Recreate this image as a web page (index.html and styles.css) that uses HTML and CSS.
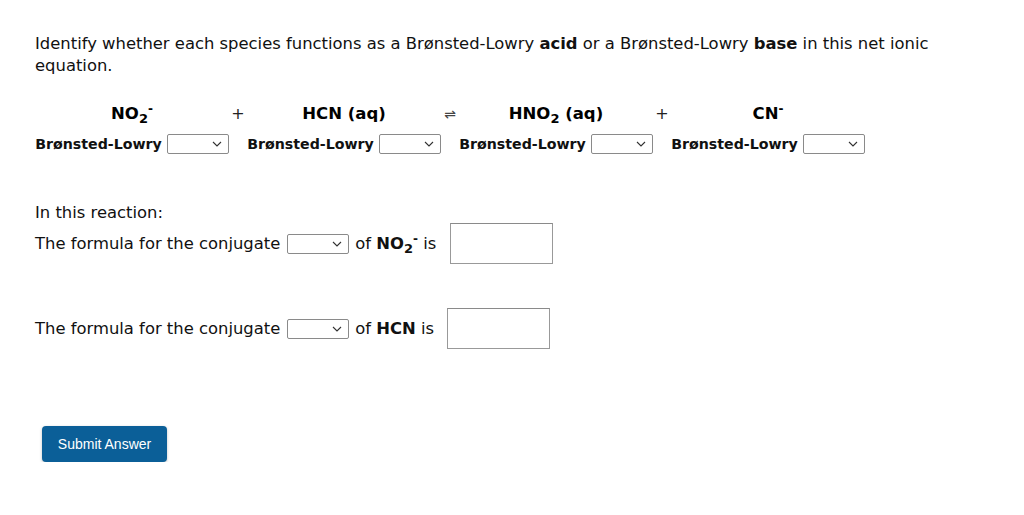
FILE: index.html
```html
<!DOCTYPE html>
<html>
<head>
<meta charset="utf-8">
<link rel="stylesheet" href="styles.css">
</head>
<body>
<div class="page">
  <p class="intro">Identify whether each species functions as a Brønsted-Lowry <b>acid</b> or a Brønsted-Lowry <b>base</b> in this net ionic equation.</p>

  <div class="equation">
    <div class="cell">
      <div class="species">NO<sub>2</sub><sup>-</sup></div>
      <div class="pick"><span class="bl">Brønsted-Lowry</span><select class="sel"><option></option></select></div>
    </div>
    <div class="op">+</div>
    <div class="cell">
      <div class="species">HCN (aq)</div>
      <div class="pick"><span class="bl">Brønsted-Lowry</span><select class="sel"><option></option></select></div>
    </div>
    <div class="op eq">⇌</div>
    <div class="cell">
      <div class="species">HNO<sub>2</sub> (aq)</div>
      <div class="pick"><span class="bl">Brønsted-Lowry</span><select class="sel"><option></option></select></div>
    </div>
    <div class="op">+</div>
    <div class="cell">
      <div class="species">CN<sup>-</sup></div>
      <div class="pick"><span class="bl">Brønsted-Lowry</span><select class="sel"><option></option></select></div>
    </div>
  </div>

  <p class="lead">In this reaction:</p>
  <div class="row row1">
    <span>The formula for the conjugate</span>
    <select class="sel"><option></option></select>
    <span>of <b>NO<sub>2</sub><sup>-</sup></b> is</span>
    <input class="answer" type="text">
  </div>
  <div class="row row2">
    <span>The formula for the conjugate</span>
    <select class="sel"><option></option></select>
    <span>of <b>HCN</b> is</span>
    <input class="answer" type="text">
  </div>

  <button class="submit">Submit Answer</button>
</div>
</body>
</html>
```

FILE: styles.css
```css
html, body {
  margin: 0;
  padding: 0;
  background: #fff;
}
body {
  font-family: "DejaVu Sans", Verdana, sans-serif;
  color: #000;
}
.page {
  padding: 33px 35px 0 35px;
  width: 920px;
}
.intro {
  margin: 0;
  font-size: 16.4px;
  line-height: 22px;
  color: #111;
}
.intro b { font-weight: bold; }

.equation {
  display: flex;
  align-items: flex-start;
  margin-top: 27px;
}
.cell {
  display: flex;
  flex-direction: column;
  align-items: center;
  width: 194px;
}
.species {
  font-weight: bold;
  font-size: 16.5px;
  line-height: 20px;
  height: 22px;
}
.species sub {
  font-size: 13px;
  vertical-align: -4px;
  line-height: 0;
}
.species sup {
  font-size: 12px;
  vertical-align: 6px;
  line-height: 0;
}
.pick {
  display: flex;
  align-items: center;
  gap: 5px;
  margin-top: 8px;
}
.bl {
  font-weight: bold;
  font-size: 14.2px;
  color: #111;
  white-space: nowrap;
}
.op {
  width: 18px;
  text-align: center;
  font-size: 16px;
  line-height: 20px;
  color: #222;
}
.op.eq {
  font-size: 14px;
  color: #444;
}

.sel {
  appearance: none;
  -webkit-appearance: none;
  width: 62px;
  height: 20px;
  flex: none;
  border: 1px solid #8a8a8a;
  border-radius: 2px;
  background: #fff url("data:image/svg+xml;utf8,<svg xmlns='http://www.w3.org/2000/svg' width='10' height='6'><path d='M1 1 L5 5 L9 1' fill='none' stroke='%23333' stroke-width='1.1'/></svg>") no-repeat right 6px center;
  margin: 0;
  padding: 0;
}

.lead {
  margin: 49px 0 0 0;
  font-size: 16.4px;
  line-height: 20px;
  color: #111;
}
.row {
  display: flex;
  align-items: center;
  font-size: 16.4px;
  color: #111;
}
.row b sub {
  font-size: 13px;
  vertical-align: -4px;
  line-height: 0;
}
.row b sup {
  font-size: 12px;
  vertical-align: 6px;
  line-height: 0;
}
.row .sel {
  margin: 0 6px 0 7px;
}
.row1 { margin-top: 0; }
.row2 { margin-top: 44px; }
.row1 .answer { margin-left: 14px; }
.row2 .answer { margin-left: 13px; }
.answer {
  width: 103px;
  height: 41px;
  box-sizing: border-box;
  border: 1px solid #999;
  border-top-color: #8a8a8a;
  padding: 0;
  margin: 0;
}

.submit {
  display: block;
  margin: 77px 0 0 7px;
  width: 125px;
  height: 36px;
  background: #0b5f98;
  color: #fff;
  border: none;
  border-radius: 4px;
  font-family: "Liberation Sans", Arial, sans-serif;
  font-size: 14px;
  box-shadow: 0 1px 3px rgba(0,0,0,0.25);
}
```
